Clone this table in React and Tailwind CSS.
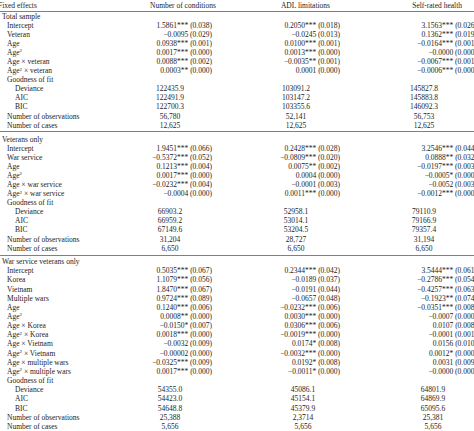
import React from 'react';

// Regression table: three samples, three outcome columns
const sections = [
  {
    title: 'Total sample',
    rowH: 'h-[9.1px] leading-[9.1px]',
    pad: 'pt-0 pb-[1.5px]',
    statMl: ['ml-0', 'ml-[61px]', 'ml-[59px]'],
    coefs: [
      ['Intercept', null, '1.5861*** (0.038)', '0.2050*** (0.018)', '3.1563*** (0.026)'],
      ['Veteran', null, '\u22120.0095 (0.029)', '\u22120.0245 (0.013)', '0.1362*** (0.019)'],
      ['Age', null, '0.0938*** (0.001)', '0.0100*** (0.001)', '\u22120.0164*** (0.001)'],
      ['Age', '', '0.0017*** (0.000)', '0.0013*** (0.000)', '\u22120.0000 (0.000)'],
      ['Age \u00d7 veteran', null, '0.0088*** (0.002)', '\u22120.0035** (0.001)', '\u22120.0067*** (0.001)'],
      ['Age', ' \u00d7 veteran', '0.0003** (0.000)', '0.0001 (0.000)', '\u22120.0006*** (0.000)'],
    ],
    fit: [
      ['Deviance', '122435.9', '103091.2', '145827.8'],
      ['AIC', '122491.9', '103147.2', '145883.8'],
      ['BIC', '122700.3', '103355.6', '146092.3'],
    ],
    counts: [
      ['Number of observations', '56,780', '52,141', '56,753'],
      ['Number of cases', '12,625', '12,625', '12,625'],
    ],
  },
  {
    title: 'Veterans only',
    rowH: 'h-[9.1px] leading-[9.1px]',
    pad: 'pt-[2.3px] pb-[2.3px]',
    statMl: ['ml-0', 'ml-[61px]', 'ml-[59px]'],
    coefs: [
      ['Intercept', null, '1.9451*** (0.066)', '0.2428*** (0.028)', '3.2546*** (0.044)'],
      ['War service', null, '\u22120.5372*** (0.052)', '\u22120.0809*** (0.020)', '0.0888** (0.032)'],
      ['Age', null, '0.1213*** (0.004)', '0.0075** (0.002)', '\u22120.0197*** (0.003)'],
      ['Age', '', '0.0017*** (0.000)', '0.0004 (0.000)', '\u22120.0005* (0.000)'],
      ['Age \u00d7 war service', null, '\u22120.0232*** (0.004)', '\u22120.0001 (0.003)', '\u22120.0052 (0.003)'],
      ['Age', ' \u00d7 war service', '\u22120.0004 (0.000)', '0.0011*** (0.000)', '\u22120.0012*** (0.000)'],
    ],
    fit: [
      ['Deviance', '66903.2', '52958.1', '79110.9'],
      ['AIC', '66959.2', '53014.1', '79166.9'],
      ['BIC', '67149.6', '53204.5', '79357.4'],
    ],
    counts: [
      ['Number of observations', '31,204', '28,727', '31,194'],
      ['Number of cases', '6,650', '6,650', '6,650'],
    ],
  },
  {
    title: 'War service veterans only',
    rowH: 'h-[9.17px] leading-[9.17px]',
    pad: 'pt-[1px]',
    statMl: ['ml-0', 'ml-[68px]', 'ml-[68px]'],
    coefs: [
      ['Intercept', null, '0.5035*** (0.067)', '0.2344*** (0.042)', '3.5444*** (0.061)'],
      ['Korea', null, '1.1079*** (0.056)', '\u22120.0189 (0.037)', '\u22120.2786*** (0.054)'],
      ['Vietnam', null, '1.8470*** (0.067)', '\u22120.0191 (0.044)', '\u22120.4257*** (0.063)'],
      ['Multiple wars', null, '0.9724*** (0.089)', '\u22120.0657 (0.048)', '\u22120.1923** (0.074)'],
      ['Age', null, '0.1240*** (0.006)', '\u22120.0232*** (0.006)', '\u22120.0351*** (0.008)'],
      ['Age', '', '0.0008** (0.000)', '0.0030*** (0.000)', '\u22120.0007 (0.000)'],
      ['Age \u00d7 Korea', null, '\u22120.0150* (0.007)', '0.0306*** (0.006)', '0.0107 (0.008)'],
      ['Age', ' \u00d7 Korea', '0.0018*** (0.000)', '\u22120.0019*** (0.000)', '\u22120.0001 (0.001)'],
      ['Age \u00d7 Vietnam', null, '\u22120.0032 (0.009)', '0.0174* (0.008)', '0.0156 (0.010)'],
      ['Age', ' \u00d7 Vietnam', '\u22120.00002 (0.000)', '\u22120.0032*** (0.000)', '0.0012* (0.000)'],
      ['Age \u00d7 multiple wars', null, '\u22120.0325*** (0.009)', '0.0192* (0.008)', '0.0031 (0.009)'],
      ['Age', ' \u00d7 multiple wars', '0.0017*** (0.000)', '\u22120.0011* (0.000)', '\u22120.0000 (0.000)'],
    ],
    fit: [
      ['Deviance', '54355.0', '45086.1', '64801.9'],
      ['AIC', '54423.0', '45154.1', '64869.9'],
      ['BIC', '54648.8', '45379.9', '65095.6'],
    ],
    counts: [
      ['Number of observations', '25,388', '2,3714', '25,381'],
      ['Number of cases', '5,656', '5,656', '5,656'],
    ],
  },
];

const grid = 'grid grid-cols-[150px_65px_130px_133px] whitespace-nowrap';
const coefPr = ['pr-[3px]', 'pr-[5px]', 'pr-[1px]'];

const Label = ({ name, sq }) => {
  if (sq === null || sq === undefined) return name;
  return (
    <>
      {name}
      <sup className="text-[5px]">2</sup>
      {sq}
    </>
  );
};

const StatRow = ({ s, name, vals, indent }) => (
  <div className={`${grid} ${s.rowH}`}>
    <div className={indent}>{name}</div>
    {vals.map((v, j) => (
      <div key={j}>
        <div className={`w-[40px] text-center ${s.statMl[j]}`}>{v}</div>
      </div>
    ))}
  </div>
);

const Section = ({ s, last }) => (
  <div className={`${s.pad} ${last ? '' : 'border-b border-[#808080]'}`}>
    <div className={`${s.rowH} pl-[2px]`}>{s.title}</div>
    {s.coefs.map(([name, sq, ...vals], i) => (
      <div key={i} className={`${grid} ${s.rowH}`}>
        <div className="pl-[7px]"><Label name={name} sq={sq} /></div>
        {vals.map((v, j) => (
          <div key={j} className={`text-right ${coefPr[j]}`}>{v}</div>
        ))}
      </div>
    ))}
    <div className={`${s.rowH} pl-[7px]`}>Goodness of fit</div>
    {s.fit.map(([name, ...vals], i) => (
      <StatRow key={i} s={s} name={name} vals={vals} indent="pl-[15px]" />
    ))}
    {s.counts.map(([name, ...vals], i) => (
      <StatRow key={i} s={s} name={name} vals={vals} indent="pl-[7px]" />
    ))}
  </div>
);

export default function App() {
  return (
    <div className="w-[474px] h-[431px] overflow-hidden bg-white text-[#1c1c1c] text-[7.5px] font-['Liberation_Serif',_'Times_New_Roman',_serif]">
      <div className="w-[478px]">
        <div className={`${grid} h-[11.5px] leading-[11px] border-b border-[#808080]`}>
          <div className="-ml-[2px]">Fixed effects</div>
          <div className="text-right pr-[3px]">Number of conditions</div>
          <div className="text-right pr-[15px]">ADL limitations</div>
          <div className="text-right pr-[16px]">Self-rated health</div>
        </div>
        {sections.map((s, i) => (
          <Section key={s.title} s={s} last={i === sections.length - 1} />
        ))}
      </div>
    </div>
  );
}
